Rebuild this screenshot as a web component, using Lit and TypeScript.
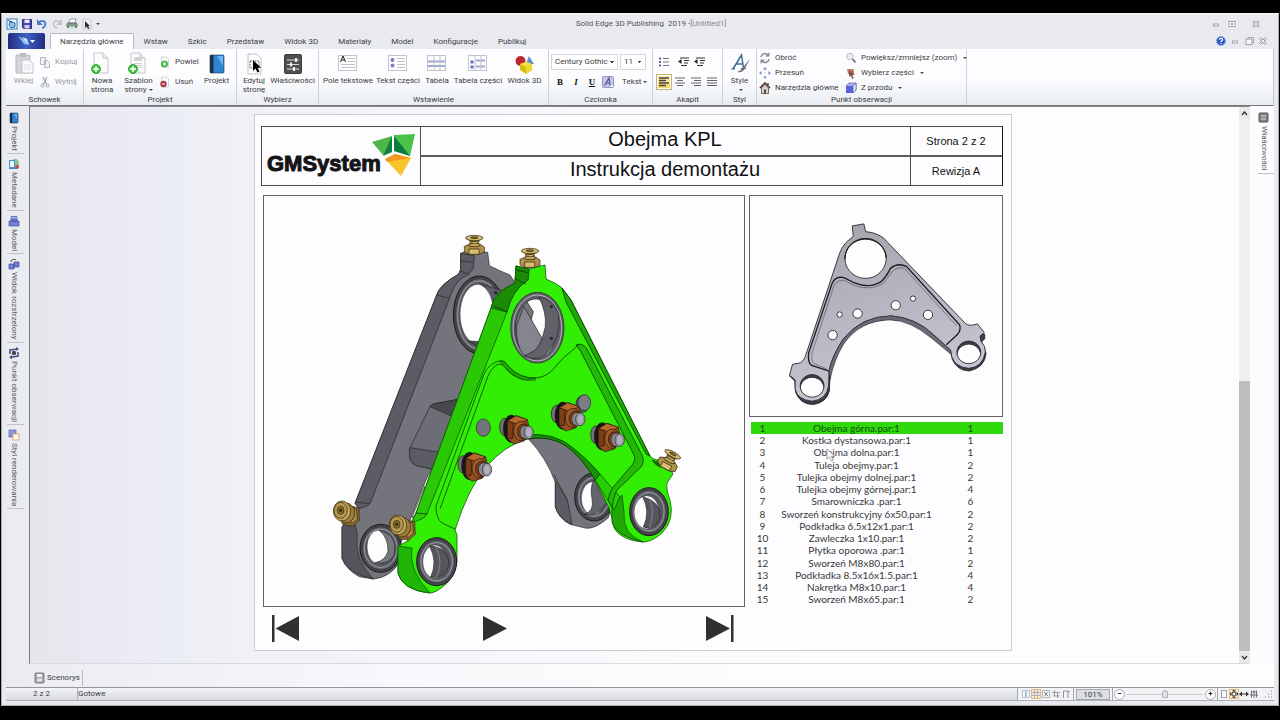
import { LitElement, html, css, svg, nothing } from "lit";
import { customElement, property, state } from "lit/decorators.js";
import { classMap } from "lit/directives/class-map.js";

const box = (w: number, h: number, body: unknown) =>
  html`<svg width=${w} height=${h} viewBox="0 0 ${w} ${h}" aria-hidden="true">${body}</svg>`;

const doc = (c = "#fbfbfb") => svg`<path d="M4 1h9l5 5v15H4z" fill=${c} stroke="#c3c5c9"/><path d="M13 1v5h5" fill="#eceef0" stroke="#c3c5c9"/>`;
const plus = (x: number, y: number, r: number) => svg`<circle cx=${x} cy=${y} r=${r} fill="#3cc63a" stroke="#239a2a" stroke-width=".8"/><path d="M${x - r * 0.6} ${y}h${r * 1.2}M${x} ${y - r * 0.6}v${r * 1.2}" stroke="#fff" stroke-width=${r * 0.4}/>`;
const lines = (ys: number[], x1: number, x2: number, c: string) => ys.map((y) => svg`<path d="M${x1} ${y}H${x2}" stroke=${c}/>`);
const book = (w: number, h: number) => svg`<rect x="1" y="1" width=${w - 2} height=${h - 2} rx="1" fill="#2f84d4" stroke="#1a3552" stroke-width=".6"/><rect x="1" y="1" width=${w * 0.22} height=${h - 2} fill="#1d3147"/><path d="M${w * 0.5} 2H${w - 2}V${h * 0.6}z" fill="#6cb5ee"/>`;

const icons: Record<string, unknown> = {
  app: box(12, 12, svg`<rect x="1" y="1" width="10" height="10" fill="#fff" stroke="#2a7fc0"/><path d="M4 3l5 2v4l-4 1-2-3z" fill="#8cc4ea" stroke="#1c6aac"/><path d="M2 2l4 3" stroke="#1c6aac"/>`),
  save: box(12, 12, svg`<path d="M1.500 1.500h9v9h-8l-1-1z" fill="#4a46b0" stroke="#302c80"/><rect x="3.500" y="1.500" width="5" height="3.500" fill="#e8e8f8"/><rect x="3.500" y="7" width="5" height="3.500" fill="#cfd0ee"/>`),
  undo: box(12, 12, svg`<path d="M3 4.500C6 1 11 4 9 7.500 8.500 9 7.500 9.800 6 10" fill="none" stroke="#4a7fd0" stroke-width="1.900"/><path d="M1 1v6h6z" fill="#4a7fd0"/>`),
  redo: box(12, 12, svg`<path d="M9 4.500C6 1 1 4 3 7.500 3.500 9 4.500 9.800 6 10" fill="none" stroke="#c2c4c9" stroke-width="1.700"/><path d="M11 1v6H5z" fill="#c2c4c9"/>`),
  print: box(12, 12, svg`<path d="M4 1h6L9 5H3z" fill="#fff" stroke="#7c8a84" stroke-width=".8"/><rect x="1" y="5" width="10" height="4.500" rx="1" fill="#889a90" stroke="#536058" stroke-width=".8"/><path d="M3 8.500h6V11H3z" fill="#cfe9d2"/>`),
  pick: box(12, 12, svg`<path d="M2 1h6l2 2v8H2z" fill="#f2f2f2" stroke="#bdbfc3" stroke-width=".8"/><path d="M4 3v7l1.700-1.600L7 11l1.400-.7L7.200 8H9z" fill="#2b2b2b"/>`),
  paste: box(22, 24, svg`<rect x="3" y="3" width="14" height="18" rx="1" fill="#d3d5da" stroke="#b7bac0"/><rect x="7" y="1" width="6" height="4" fill="#b9bcc3"/><path d="M9 8h7l4 4v9H9z" fill="#fafafa" stroke="#c3c6cc"/>${lines([13, 15, 17], 11, 18, "#dcdee2")}`),
  copy: box(12, 12, svg`<path d="M1.500 1.500h5v7h-5zM5.500 4.500h3l2 2v5h-5z" fill="#f3f3f5" stroke="#b4b7bd"/>`),
  cut: box(12, 12, svg`<path d="M4 1l3.500 7M8 1L4.500 8" stroke="#a2a5ab" stroke-width="1.300"/><circle cx="3.500" cy="9.500" r="1.500" fill="none" stroke="#a2a5ab"/><circle cx="8.500" cy="9.500" r="1.500" fill="none" stroke="#a2a5ab"/>`),
  newPage: box(24, 24, svg`${doc()}${plus(6, 17, 4.500)}`),
  template: box(24, 24, svg`${doc()}<rect x="7" y="5" width="8" height="4" fill="#d2d4d8"/>${lines([11.5, 13.5, 15.5], 7, 15, "#cfd1d5")}${plus(6, 17, 4.500)}`),
  dup: box(12, 12, svg`<path d="M2.500 1h5l2 2v8h-7z" fill="#fafafa" stroke="#c6c8cc" stroke-width=".8"/>${plus(5.500, 8, 3)}`),
  del: box(12, 12, svg`<path d="M2.500 1h5l2 2v8h-7z" fill="#fafafa" stroke="#c6c8cc" stroke-width=".8"/><circle cx="4.500" cy="8" r="3.200" fill="#a93a45"/><path d="M3 8h3" stroke="#fff"/>`),
  book: box(18, 24, svg`<g transform="translate(1 2)">${book(16, 20)}</g>`),
  edit: box(18, 24, svg`<path d="M3 2h9l4 4v16H3z" fill="#fcfcfc" stroke="#c3c5c9"/><rect x="5" y="9" width="9" height="7" fill="none" stroke="#555" stroke-dasharray="1.500 1"/><path d="M8 8v11l2.600-2.400 1.800 3.800 2-1-1.800-3.600H16z" fill="#000"/>`),
  props: box(20, 24, svg`<rect x="1.500" y="2.500" width="17" height="19" rx="1.500" fill="#505050" stroke="#3b3b3b"/><path d="M4 8h12M4 12.500h12M4 17h12" stroke="#d9d9d9" stroke-width="1.200"/><path d="M13 6v4M8 10.500v4M11 15v4" stroke="#fff" stroke-width="1.800"/>`),
  textbox: box(20, 24, svg`<rect x=".500" y="3.500" width="18" height="15" fill="#fdfdfd" stroke="#c2c5ca"/><path d="M2.500 10L5 4l2.500 6M3.500 8h3" fill="none" stroke="#222"/>${lines([6.5, 9.5], 9, 17, "#c0c3c9")}${lines([12.5, 15.5], 3, 17, "#c0c3c9")}`),
  parttext: box(20, 24, svg`<rect x=".500" y="3.500" width="18" height="15" fill="#fdfdfd" stroke="#c2c5ca"/><circle cx="4.500" cy="8" r="2" fill="#7d80c4"/><circle cx="4.500" cy="13.500" r="2" fill="#7d80c4"/>${lines([6.5, 9.5, 12.5, 15.5], 9, 17, "#c0c3c9")}`),
  table: box(20, 24, svg`<rect x=".500" y="3.500" width="18" height="15" fill="#fdfdfd" stroke="#c2c5ca"/><path d="M1 9.500h17M1 14h17" stroke="#9fa9d8" stroke-width="2"/><path d="M7 4v14M13 4v14" stroke="#c2c5ca"/>`),
  parttable: box(20, 24, svg`<rect x=".500" y="3.500" width="18" height="15" fill="#fdfdfd" stroke="#c2c5ca"/><path d="M8 8.500h9M8 14.500h9" stroke="#9fa9d8" stroke-width="2"/><path d="M7 4v14M13 4v14" stroke="#c2c5ca"/><circle cx="4" cy="10" r="1.800" fill="#6d76c0"/><circle cx="4" cy="15" r="1.800" fill="#6d76c0"/>`),
  view3d: box(22, 24, svg`<path d="M15 4l5 8h-8z" fill="#5f94cf"/><circle cx="6.500" cy="9" r="5" fill="#c12630"/><path d="M6 12l6-2 6 2v6l-6 4-6-4z" fill="#d3bd12"/><path d="M6 12l6-2 6 2-6 2.500z" fill="#f5e44c"/><path d="M12 14.500V22l6-4v-6z" fill="#eadb2e"/>`),
  hilite: box(12, 12, svg`<rect x=".500" y=".500" width="11" height="11" rx="1" fill="#c3c4e8" stroke="#9294c4"/><path d="M2.500 9.500L7 2l1 7.500M4 7h4" fill="none" stroke="#55508f" stroke-width="1.200"/><path d="M8 11l3-3v3z" fill="#fff"/>`),
  bullets: box(12, 12, svg`<path d="M5 2.500h6M5 6h6M5 9.500h6" stroke="#777"/><path d="M1 2.500h2M1 6h2M1 9.500h2" stroke="#5b62b0" stroke-width="1.800"/>`),
  outdent: box(12, 12, svg`<path d="M2 2h9M6 4.500h5M6 7h4M3 9.500h6" stroke="#333"/><path d="M0 5.500l3.500-2.500v5z" fill="#222"/>`),
  indent: box(12, 12, svg`<path d="M2 2h9M6 4.500h5M6 7h4M3 9.500h6" stroke="#333"/><path d="M0 5.500l3.500-2.500v5z" fill="#222"/>`),
  left: box(12, 12, svg`<path d="M1 2h10M1 4.500h7M1 7h10M1 9.500h7" stroke="#444" stroke-width="1.300"/>`),
  center: box(12, 12, svg`<path d="M1 2h10M3 4.500h6M1 7h10M3 9.500h6" stroke="#666"/>`),
  right: box(12, 12, svg`<path d="M1 2h10M4 4.500h7M1 7h10M4 9.500h7" stroke="#666"/>`),
  justify: box(12, 12, svg`<path d="M1 2h10M1 4.500h10M1 7h10M1 9.500h10" stroke="#666"/>`),
  style: box(22, 24, svg`<path d="M4 17L12.500 3l2 13M7.500 12h6" fill="none" stroke="#3b6d9e" stroke-width="1.500"/><path d="M2 17h4M12 16.500h5" stroke="#3b6d9e"/><path d="M21 7l-6 7c-2 2-3 5-7 6 4 1 7-1 8-4z" fill="#6d7176"/>`),
  rotate: box(12, 12, svg`<path d="M2 5a4 4 0 017-2M10 7a4 4 0 01-7 2" fill="none" stroke="#8b8e93" stroke-width="1.600"/><path d="M10.500 0v4.500H6zM1.500 12V7.500H6z" fill="#8b8e93"/>`),
  pan: box(12, 12, svg`<path d="M6 0l2 2.500H4zM6 12l2-2.500H4zM0 6l2.500-2v4zM12 6L9.500 4v4z" fill="#6d8fc6"/><path d="M5.500 6h1" stroke="#8aa"/>`),
  home: box(12, 12, svg`<path d="M1 6l5-5 5 5" fill="none" stroke="#4d3a35" stroke-width="1.600"/><path d="M2.500 6L6 2.500 9.500 6v5.500h-7z" fill="#d9cfcb" stroke="#5b4843" stroke-width=".8"/><path d="M5 7.500h2v4H5z" fill="#5b4843"/><path d="M9 1v2" stroke="#4d3a35" stroke-width="1.400"/>`),
  zoom: box(12, 12, svg`<circle cx="5" cy="4.500" r="3.300" fill="#e3edf5" stroke="#b7c1c9"/><path d="M7.500 7l3 3.500" stroke="#666" stroke-width="1.600"/>`),
  selpart: box(12, 12, svg`<path d="M2 2h6l1 1v4H3z" fill="#c77a64"/><path d="M4 3v7l1.800-1.600L7.300 12l1.500-.700-1.500-3.300H10z" fill="#77554a"/>`),
  cube: box(12, 12, svg`<path d="M1 4l3-3h7v7l-3 3z" fill="#a9aef0" stroke="#555a9c" stroke-width=".7"/><rect x="1" y="4" width="7" height="7" fill="#5a63de"/><path d="M8 4l3-3v7l-3 3z" fill="#e8e9fb" stroke="#555a9c" stroke-width=".7"/>`),
  rBook: box(12, 12, svg`<g transform="translate(1 0)">${book(10, 12)}</g>`),
  rMeta: box(12, 12, svg`<path d="M5 1h4l2 3v4H5z" fill="#8cc48c"/><rect x="1.500" y="2.500" width="5" height="7" fill="#eaf5fc" stroke="#4a94c4"/><circle cx="9" cy="9" r="2" fill="#c44a4a"/><path d="M1 10.500h8" stroke="#3b85b8"/>`),
  rModel: box(12, 12, svg`<path d="M1 6h10v5H1zM3 1.500h6V6H3z" fill="#6f7fd8" stroke="#4453a8" stroke-width=".7"/><path d="M3 2.500h6" stroke="#b5bef2"/>`),
  rExplode: box(12, 12, svg`<path d="M1 6h5v5H1zM6 4h5v5H6z" fill="#7280da" stroke="#38459a" stroke-width=".7"/><path d="M3 4c0-3 3-3 5-2" fill="none" stroke="#333"/>`),
  rView: box(12, 12, svg`<path d="M2 7V3l8-1M10 5v4l-8 1.500" fill="none" stroke="#4a4f86" stroke-width="1.600"/><circle cx="6" cy="6" r="2.200" fill="#44484f"/><path d="M8 0l3 2-3 2zM4 8L1 10.500 4 12z" fill="#4a4f86"/>`),
  rStyle: box(12, 12, svg`<rect x="1" y="1" width="7" height="7" fill="#8c95d8" stroke="#5d66ac" stroke-width=".7"/><rect x="5" y="5" width="6" height="6" fill="#fff6ee" stroke="#dba472" stroke-width=".9"/>`),
  rProps: box(12, 12, svg`<rect x="1" y="1" width="9" height="9" rx=".800" fill="#808080" stroke="#555"/><path d="M3 4h5M3 7h5" stroke="#ddd"/>`),
  scene: box(12, 12, svg`<rect x="1" y="1" width="9" height="10" rx="1" fill="#a9abae" stroke="#606367" stroke-width=".8"/><rect x="3" y="2" width="5" height="3" fill="#f2f2f2"/><rect x="3" y="6.500" width="5" height="3" fill="#e4e4e4"/>`),
  s1: box(10, 10, svg`<path d="M1.500 1.500h3v7h-3zM5.500 1.500h3v7h-3z" fill="#f7fbff" stroke="#a7bfd2"/>`),
  s2: box(10, 10, svg`<path d="M1 3.500h8M1 6.500h8M3.500 1v8M6.500 1v8" stroke="#a5b0c6"/>`),
  s3: box(10, 10, svg`<path d="M1.500 1.500h7v7h-7z" fill="none" stroke="#b3b6bb"/><path d="M3 3l4 4M6.500 3L4 7" stroke="#82858b"/>`),
  s4: box(10, 10, svg`<path d="M1 3.500h8M2 7h7M3.500 1v6M6.500 3v6" stroke="#9da0a6"/>`),
  s5: box(10, 10, svg`<path d="M2.500 9V2H7v7M7 2.500h2" fill="none" stroke="#8e9197"/>`),
  z1: box(10, 10, svg`<rect x="2.500" y="1.500" width="5" height="7" fill="#fdfdfd" stroke="#9da0a6"/>`),
  z2: box(10, 10, svg`<path d="M5 0l2 2.500H3zM5 10l2-2.500H3zM0 5l2.500-2v4zM10 5L7.500 3v4z" fill="#333"/><rect x="3.500" y="3.500" width="3" height="3" fill="#fff" stroke="#555" stroke-width=".8"/>`),
  z3: box(10, 10, svg`<path d="M0 5l3-2.500v5zM10 5L7 2.500v5z" fill="#333"/><path d="M2 5h6" stroke="#333"/>`),
  z4: box(10, 10, svg`<path d="M5 1v8M2 3h6M2.500 1.500v7M7.500 1.500v7M1 6h8" stroke="#55585e" stroke-width=".8"/>`),
  min: box(12, 10, svg`<rect x="3.500" y="5" width="5" height="2" fill="#fff" stroke="#8d9096" stroke-width=".8"/>`),
  max: box(12, 10, svg`<rect x="3" y="2.500" width="6" height="5" fill="#fff" stroke="#8d9096" stroke-width=".8"/><rect x="5" y="4" width="2" height="2" fill="#999"/>`),
  restore: box(12, 10, svg`<path d="M3 3h6v5.500H3zM5 3V1.500h5.500V7H9" fill="#f6f6f6" stroke="#8d9096" stroke-width=".8"/>`),
  close: box(12, 10, svg`<path d="M3 2l6 6M9 2L3 8" stroke="#8d9096" stroke-width="2.400"/><path d="M3 2l6 6M9 2L3 8" stroke="#fff"/>`),
  help: box(12, 12, svg`<circle cx="6" cy="6" r="4.500" fill="#2b5cc4" stroke="#8fa9dc"/><path d="M4.500 4.800C4.500 3 7.800 3 7.500 4.800 7.400 5.700 6 5.700 6 7M6 8v1" fill="none" stroke="#fff" stroke-width="1.200"/>`),
};

const controlBase = css`
  button, select, input { font: inherit; color: inherit; margin: 0; }
  button { background: none; border: 0; padding: 0; }
  svg { display: block; flex: none; }
  .caret { display: inline-block; width: 0; height: 0; border: 2px solid transparent; border-bottom-width: 0; border-top-color: #444; vertical-align: middle; }
`;

/** Ribbon command: a large icon over its caption, or a small one beside it. */
@customElement("ribbon-tool")
export class RibbonTool extends LitElement {
  @property() icon = "";
  @property() label = "";
  @property({ type: Boolean }) large = false;
  @property({ type: Boolean }) menu = false;
  @property({ type: Boolean }) active = false;
  @property({ type: Boolean }) muted = false;
  @property({ type: Boolean }) bare = false;
  static styles = [controlBase, css`
    :host { display: block; min-width: 0; }
    .tool { display: flex; align-items: center; gap: 4px; line-height: 12px; white-space: nowrap; }
    .large { flex-direction: column; gap: 0; width: 100%; line-height: 9px; text-align: center; }
    .large .text { white-space: pre-line; }
    .active { background: linear-gradient(#fbeeb4, #f7d768); outline: 1px solid #c9b26c; outline-offset: 1px; }
    .muted { color: #96989d; }
    .caret { margin-left: 6px; }
    .large .caret, .tight .caret { margin-left: 2px; }
  `];
  render() {
    const caret = this.menu ? html`<span class="caret"></span>` : nothing;
    return html`<button class=${classMap({ tool: true, large: this.large, active: this.active, muted: this.muted, tight: !this.icon })} aria-label=${this.label.replace("\n", " ")}>
      ${icons[this.icon]}${this.bare ? nothing : html`<span class="text">${this.label}${caret}</span>`}
    </button>`;
  }
}

const ink = "#222226";
const ring = (x: number, y: number, rx: number, ry: number, hx: number, hy: number, hrx: number, hry: number) => svg`
  <ellipse cx=${x} cy=${y} rx=${rx} ry=${ry} fill="#45454c" stroke="#19191c" stroke-width="3"/>
  <ellipse cx=${x} cy=${y} rx=${rx - 7} ry=${ry - 8} fill="#686870" stroke="#202024" stroke-width="1.500"/>
  <ellipse cx=${x} cy=${y} rx=${rx - 13} ry=${ry - 15} fill="#58585f" stroke="#b5b5c2" stroke-width="2"/>
  <ellipse cx=${hx} cy=${hy} rx=${hrx} ry=${hry} fill="#fdfdfe" stroke=${ink} stroke-width="1.500"/>`;

const bolt = (x: number, y: number) => svg`<g transform="translate(${x} ${y})" stroke="#1c120c" stroke-width="2">
  <ellipse cx="-34" cy="-8" rx="15" ry="26" fill="#74747d"/>
  <ellipse cx="-14" cy="-3" rx="24" ry="41" fill="#16161a"/>
  <path d="M-26-26L0-42 34-30 42 4 24 34-6 43-26 28z" fill="#96501f"/>
  <path d="M-26-26L0-42 34-30 10-16-8-20z" fill="#b9682c"/>
  <path d="M-26-26l18 6-2 46-16 2z" fill="#7c3e17"/>
  <ellipse cx="16" cy="4" rx="23" ry="29" fill="#a65b26"/>
  <ellipse cx="22" cy="6" rx="18" ry="23" fill="#7c4019"/>
  <ellipse cx="26" cy="7" rx="14" ry="19" fill="#8a8a95"/>
  <path d="M26-11H38V27H26z" fill="#8a8a95" stroke="none"/>
  <ellipse cx="38" cy="8" rx="14" ry="19" fill="#b1b1bf"/><ellipse cx="38" cy="8" rx="10" ry="14" fill="none" stroke="#63636d" stroke-width="1.500"/></g>`;

/** Upright grease nipple whose seat is at (x, y). */
const nipple = (x: number, y: number, r = 0) => svg`<g transform="translate(${x} ${y}) rotate(${r})" stroke="#2c210a" stroke-width="2">
  <path d="M-30-18L-15-24H18L30-16V0L14 6H-16L-30-2z" fill="#b0914a"/><path d="M-16-10L14-10V6H-16z" fill="#d9bd72"/>
  <path d="M-13-42H13V-18H-13z" fill="#a5873f"/><path d="M-4-42H6V-18H-4z" fill="#e3cc87" stroke="none"/>
  <ellipse cx="0" cy="-22" rx="18" ry="5" fill="#c5a75c"/><path d="M-26-44Q0-20 26-44" fill="#8e7433"/>
  <ellipse cx="0" cy="-43" rx="26" ry="8" fill="#d9bd72"/><ellipse cx="0" cy="-44" rx="11" ry="3" fill="#8e7433"/></g>`;

const nippleFront = (x: number, y: number) => svg`<g transform="translate(${x} ${y})" stroke="#2c210a" stroke-width="2">
  <path d="M-14 14L22-14 44-10 46 28 26 46-4 40z" fill="#8e6f2f"/><path d="M10-10l28 4 2 32-18 14z" fill="#aa8a44"/>
  <ellipse cx="6" cy="6" rx="26" ry="30" fill="#9c7d3a"/><ellipse cx="-6" cy="0" rx="26" ry="30" fill="#c5a75c"/>
  <ellipse cx="-10" cy="-2" rx="20" ry="24" fill="#b6974f"/><ellipse cx="-10" cy="-2" rx="10" ry="12" fill="#8e7433"/><circle cx="-10" cy="-2" r="4" fill="#3d2f10"/></g>`;

const assembly = svg`
  <g transform="translate(320 225) scale(.33333)" stroke=${ink} stroke-width="2" stroke-linejoin="round">
    <path d="M422 85L440 78 503 82 508 122Q540 138 570 150L640 260 560 560 415 560 318 765 268 890 240 960 240 1010Q210 1058 160 1062L118 1055Q80 1035 66 1000V905L76 895 112 888 118 850 105 835 350 210Q358 180 415 148L422 135z" fill="#74747d"/>
    <path d="M422 85L463 92 460 128Q452 148 424 160 400 180 388 222L152 832Q146 846 116 850L105 835 350 210Q358 180 415 148L422 135z" fill="#5c5c65"/>
    <path d="M350 210L388 220M418 136L446 148M422 108L460 112M108 832L150 836" fill="none"/>
    <path d="M66 905L76 895 106 900 112 930Q100 1000 160 1062 80 1045 66 1000z" fill="#55555d"/>
    <path d="M330 545Q334 538 344 536L420 522 420 560 350 735 290 722Q262 712 270 668z" fill="#6d6d76"/>
    <path d="M330 545Q334 538 344 536L420 522 416 545 396 574z" fill="#47474e"/>
    <path d="M270 668L372 684 350 735 290 722Q262 712 270 668z" fill="#5b5b63"/>
    <path d="M314 785L276 878 290 868 316 795z" fill="#fdfdfe"/>
    ${ring(478, 270, 78, 117, 474, 268, 54, 90)}
    <path d="M482 178L560 200 575 250 520 260Q520 200 482 178z" fill="#5d5d66"/><circle cx="527" cy="203" r="4" fill="#333"/>
    <path d="M446 348L486 350 476 366z" fill="#4a4a52"/>
    ${ring(182, 970, 62, 72, 174, 966, 33, 50)}
    <path d="M178 916Q236 930 222 990 205 1022 166 1013 194 1008 204 980 206 940 178 916z" fill="#78787f"/>
    ${nipple(463, 82)}
    ${nippleFront(72, 858)}
  </g>
  <g transform="translate(480 235) scale(.33333)" stroke=${ink} stroke-width="2" stroke-linejoin="round">
    <path d="M146 612L210 606 320 668 400 800 385 848Q350 880 320 880L270 868Q235 850 226 815V742Q200 670 146 612z" fill="#74747d"/>
    <path d="M226 738L262 795 276 868Q235 850 226 815zM222 720L262 795" fill="#5c5c65"/>
    ${ring(342, 786, 58, 72, 338, 790, 34, 50)}
    <path d="M340 738Q330 760 336 790 344 830 312 838 350 850 382 800L356 738z" fill="#64646c"/>
  </g>
  <g stroke="#0c5a04" stroke-width=".800" stroke-linejoin="round">
    <path fill-rule="evenodd" d="M516 266L529 269 545 265 546 279Q556 283 562 288L571 300 650 456Q655 462 665 459L673 474 667 483Q666 490 670 500 675 520 662 533 652 542 643 542 630 541 622 536 612 530 612 518L609 508 595 480Q583 458 565 445 548 435 527 439 504 446 487 466 468 488 455 530L457 535V562Q453 578 446 584 436 593 430 593 416 592 406 585 399 579 398 573V546L408 541Q412 532 411 523L416 513 491 308Q494 292 515 283z
      M537 293a25 33 0 1 0 .100 0z" fill="#32ee05"/>
    <path d="M516 266L529 269 528 280Q512 290 507 312L427 514Q424 520 412 522L416 513 491 308Q494 292 515 283z" fill="#2bc806"/>
    <path d="M516 266L529 269 528 280Q512 290 507 312L491 308Q494 292 515 283z" fill="#1b8a05"/>
    <path d="M494 306L507 312M515 279L526 284M517 270L529 273M416 513L427 514" fill="none" stroke="#063802"/>
    <path d="M398 546L412 548Q408 570 430 593 402 590 398 573z" fill="#20b606"/>
    <path d="M622 495L612 508V522Q616 536 643 542 622 534 624 512z" fill="#1fa806"/>
    <path d="M595 480L600 474 620 497 614 510z" fill="#28cc06"/>
    <path d="M507 440Q540 428 565 442 585 456 600 474L595 480Q583 458 565 445 548 435 527 439z" fill="#189005" stroke="#063802"/>
    <path d="M576 345Q582 342 587 349L642 455Q645 462 641 467L618 489Q614 493 612 508L608 500Q610 490 614 486L633 464Q636 460 634 455L580 350z" fill="#23b806" stroke="#064002"/>
    <path d="M500 361Q505 360 508 366 520 379 536 378 548 377 556 366 562 358 574 349L579 344M436 506L484 374Q490 362 500 361M440 509L488 376Q494 364 500 364 504 364 507 370 518 382 536 380M436 506Q436 519 442 523L455 529" fill="none" stroke="#064002"/>
    <path d="M500 361Q505 360 508 366 520 379 536 378L524 380Q508 374 500 361z" fill="#1fa806"/>
    <path d="M652 460Q660 464 665 459L668 464Q660 472 652 460z" fill="#146e05"/>
    <path d="M562 288L571 300 650 456 646 454 566 302z" fill="#1fa806" stroke="#063802"/>
  </g>
  <g transform="translate(480 235) scale(.33333)" stroke=${ink} stroke-width="2">
    <path fill-rule="evenodd" d="M172 172a80 106 0 1 0 .100 0zM168 192a62 90 0 1 1-.100 0z" fill="#606069"/>
    <ellipse cx="172" cy="279" rx="73" ry="99" fill="none" stroke="#b4b4c2" stroke-width="3"/>
    <path d="M132 215L186 310 170 345 132 362Q106 330 110 270z" fill="#85858e"/>
    <path d="M176 186Q200 230 196 275L186 312Q178 345 134 364 165 378 194 362 246 310 236 238 222 192 176 186z" fill="#62626b"/>
    <circle cx="214" cy="215" r="4" fill="#333"/><circle cx="214" cy="310" r="4" fill="#333"/>
    <ellipse cx="308" cy="507" rx="20" ry="25" fill="#5c5c65"/><ellipse cx="313" cy="503" rx="19" ry="24" fill="#7c7c85"/>
    <ellipse cx="10" cy="578" rx="21" ry="26" fill="#74747d"/>
    ${bolt(108, 584)}${bolt(263, 545)}${bolt(381, 607)}${bolt(-17, 696)}
    ${ring(507, 830, 58, 72, 500, 832, 38, 50)}
    <path d="M488 785Q512 830 490 876 520 888 540 850 545 800 488 785z" fill="#55555d"/><path d="M508 790Q526 830 508 878" fill="none" stroke="#9a9aa5"/>
    ${nipple(150, 91)}${nipple(558, 696, 28)}
  </g>
  <g transform="translate(320 225) scale(.33333)" stroke=${ink} stroke-width="2">
    ${ring(350, 1010, 60, 72, 344, 1010, 36, 50)}
    <path d="M328 962Q354 1010 332 1056 370 1066 388 1020 386 966 328 962z" fill="#55555d"/><path d="M348 966Q372 1010 348 1060" fill="none" stroke="#9a9aa5"/>
    ${nippleFront(240, 900)}
  </g>`;

const part = svg`
  <defs><linearGradient id="steel" x1="0" y1="0" x2=".300" y2="1"><stop offset="0" stop-color="#a2a2aa"/><stop offset=".600" stop-color="#b8b8c4"/><stop offset="1" stop-color="#c6c6d4"/></linearGradient></defs>
  <g transform="translate(745 190) scale(.33333)" stroke="#1c1c20" stroke-width="2.500" stroke-linejoin="round">
    <path fill-rule="evenodd" d="M134 560L150 575 152 608Q165 645 205 646 246 640 254 605L256 560Q262 530 272 510 300 400 430 390 530 390 590 450L622 490 624 510Q640 545 676 545 722 535 726 492L712 458 722 448 722 435 440 300 160 540z
      M202 564a36 34 0 1 0 .100 0zM674 464a36 34 0 1 0 .100 0z" fill="#3e3e46"/>
    <path fill-rule="evenodd" d="M323 108L358 102 363 125Q410 130 430 158L664 402Q675 412 700 403L721 430 708 440 711 456Q725 470 724 488 716 534 674 537 632 534 622 500L619 482 568 436Q515 385 440 379 350 380 295 450 262 500 253 545L252 588Q246 632 202 636 158 632 151 600V572L134 558 143 525 160 522Q175 520 182 500L285 190Q296 160 326 140z
      M363 146a62 60 0 1 0 .100 0zM202 556a36 34 0 1 0 .100 0zM674 455a36 34 0 1 0 .100 0z" fill="url(#steel)"/>
    <path d="M252 545L200 528Q188 518 192 490L262 282Q272 258 298 264L330 280Q375 298 410 276 425 262 438 236 460 218 486 230L646 406Q652 420 640 435L606 466" fill="none" stroke-width="4"/>
    <path d="M248 540L206 522Q198 512 202 490L268 288Q278 270 300 272L330 288Q378 304 416 282L444 244Q462 230 480 236L638 410" fill="none" stroke="#55555e" stroke-width="2"/>
    <path d="M253 545Q262 500 295 450 350 380 440 379 515 385 568 436L619 482 622 496 560 445Q500 395 440 391 345 392 296 466 268 512 256 572z" fill="#6a6a74" stroke-width="1.500"/>
    <path d="M301 208a62 60 0 0 1 124-4 60 56 0 0 0-124 4z" fill="#3e3e46"/>
    <g fill="#fdfdfe"><circle cx="264" cy="437" r="14"/><circle cx="285" cy="375" r="8"/><circle cx="339" cy="372" r="14"/><circle cx="454" cy="347" r="14"/><circle cx="506" cy="327" r="8"/><circle cx="551" cy="376" r="14"/></g>
  </g>`;

const parts: [string, number][] = [
  ["Obejma górna.par:1", 1], ["Kostka dystansowa.par:1", 1], ["Obejma dolna.par:1", 1], ["Tuleja obejmy.par:1", 2],
  ["Tulejka obejmy dolnej.par:1", 2], ["Tulejka obejmy górnej.par:1", 4], ["Smarowniczka .par:1", 6],
  ["Sworzeń konstrukcyjny 6x50.par:1", 2], ["Podkładka 6.5x12x1.par:1", 2], ["Zawleczka 1x10.par:1", 2],
  ["Płytka oporowa .par:1", 1], ["Sworzeń M8x80.par:1", 2], ["Podkładka 8.5x16x1.5.par:1", 4], ["Nakrętka M8x10.par:1", 4], ["Sworzeń M8x65.par:1", 2],
];

/** The printable sheet: title block, two views, parts list and playback keys. */
@customElement("publication-sheet")
export class PublicationSheet extends LitElement {
  @state() private selected = 0;
  static styles = [controlBase, css`
    :host { display: block; box-sizing: border-box; width: 62%; min-width: 758px; padding: 11px 8px 8px 6px; background: #fdfdff; border: 1px solid #cbccd0; color: #111; font-family: "Liberation Sans", Arial, sans-serif; }
    .title-block { display: grid; grid-template-columns: 159px 1fr 92px; border: 1px solid #4c4c4e; border-right-color: #111; }
    .logo { display: flex; align-items: center; padding: 0 5px; border-right: 1px solid #4c4c4e; }
    .brand { width: 149px; height: 46px; }
    .wordmark { font: 700 22px "Liberation Sans", Arial, sans-serif; fill: #151517; stroke: #151517; stroke-width: 1; }
    .titles, .meta { display: grid; grid-template-rows: 28px 28px; row-gap: 2px; background: #5c5c5f; }
    .meta { border-left: 1px solid #4c4c4e; }
    .line { display: flex; align-items: center; justify-content: center; box-sizing: border-box; margin: 0; background: #fdfdff; font-size: 20px; font-weight: 400; line-height: 24px; padding-bottom: 4px; }
    .meta .line { font-size: 11px; padding: 0; }
    .body { display: grid; grid-template-columns: 482px minmax(0, 1fr); gap: 4px; margin: 9px 0 0 2px; }
    .view { display: block; box-sizing: border-box; width: 100%; background: #fdfdfe; border: 1px solid #626266; }
    .side { display: flex; flex-direction: column; gap: 5px; }
    .list { position: relative; margin-left: 2px; }
    table { width: 100%; height: 184px; border-collapse: collapse; font: 10px Lato, "Century Gothic", sans-serif; color: #38383a; }
    td { padding: 0; line-height: 11px; text-align: center; }
    .no { width: 24px; }
    .qty { width: 64px; }
    .on td { background: #2fd90b; color: #12500a; }
    .cursor { position: absolute; left: 75px; top: 26px; }
    .nav { display: grid; grid-template-columns: 211px 223px 28px; margin: 8px 0 0 11px; }
    .nav button { display: block; justify-self: start; }
  `];
  render() {
    return html`
      <header class="title-block">
        <div class="logo">
          <svg class="brand" viewBox="0 0 149 46" role="img" aria-label="GM System">
            <text class="wordmark" x="0" y="38">GMSystem</text>
            <path d="M105 9L125 3V19L116 22z" fill="#4bb749"/><path d="M125 3V19L116 23z" fill="#0f7f42"/>
            <path d="M127 2L148 1 143 23 128 18z" fill="#4bc14a"/><path d="M127 3V18L143 23z" fill="#0c7b40"/>
            <path d="M118 26L128 21 144 25 134 43z" fill="#f9c32c"/><path d="M118 26L128 21 144 25 120 29z" fill="#f39a23"/>
          </svg>
        </div>
        <div class="titles"><h1 class="line">Obejma KPL</h1><h2 class="line">Instrukcja demontażu</h2></div>
        <div class="meta"><p class="line">Strona 2 z 2</p><p class="line">Rewizja A</p></div>
      </header>
      <div class="body">
        <svg class="view" viewBox="264 196 480 410" role="img" aria-label="Obejma KPL">${assembly}</svg>
        <div class="side">
          <svg class="view" viewBox="750 196 253 221" role="img" aria-label="Obejma górna">${part}</svg>
          <div class="list">
            <table><tbody>${parts.map(([name, n], i) => html`
              <tr class=${classMap({ on: i === this.selected })} @click=${() => (this.selected = i)}><td class="no">${i + 1}</td><td>${name}</td><td class="qty">${n}</td></tr>`)}
            </tbody></table>
            <svg class="cursor" width="10" height="14" viewBox="0 0 10 14" aria-hidden="true"><path d="M1 1v10l2.500-2 2 4 1.800-1-2-3.700H9z" fill="#fff" stroke="#888" stroke-width=".8"/></svg>
          </div>
        </div>
      </div>
      <nav class="nav">
        <button aria-label="Początek"><svg width="27" height="27" viewBox="0 0 27 27"><path d="M0 0h2.500v27H0zM3.500 13.500L27 1v25z" fill="#303033"/></svg></button>
        <button aria-label="Odtwórz"><svg width="25" height="27" viewBox="0 0 25 27"><path d="M0 1l24 12.500L0 26z" fill="#303033"/></svg></button>
        <button aria-label="Koniec"><svg width="28" height="27" viewBox="0 0 28 27"><path d="M0 1l24 12.500L0 26zM25 0h2.500v27H25z" fill="#303033"/></svg></button>
      </nav>`;
  }
}

const T = (icon: string, label: string, o: { large?: boolean; menu?: boolean; muted?: boolean; active?: boolean; bare?: boolean } = {}) =>
  html`<ribbon-tool .icon=${icon} .label=${label} .large=${!!o.large} .menu=${!!o.menu} .muted=${!!o.muted} .active=${!!o.active} .bare=${!!o.bare}></ribbon-tool>`;
const L = { large: true };
const B = { bare: true };

@customElement("app-root")
export class AppRoot extends LitElement {
  @state() private zoom = 50;
  static styles = [controlBase, css`
    :host { display: flex; flex-direction: column; box-sizing: border-box; min-height: 100vh; padding: 13px 1px 14px; background: #000; color: #3b3d42; font: 8px/12px Roboto, "Open Sans", sans-serif; }
    .window { flex: 1; display: flex; flex-direction: column; padding: 0 4px 4px; background: #e9eaf0; border: 1px solid #a8aab0; border-top-color: #f4f4f8; }
    .caption { display: grid; grid-template-columns: 1fr auto 1fr; align-items: center; height: 19px; }
    .quick { display: flex; gap: 3px; align-items: center; }
    .title { margin-left: 22px; white-space: pre; color: #55575c; }
    .dim { color: #85878c; }
    .wincontrols { display: flex; justify-content: flex-end; gap: 4px; padding-right: 12px; }
    .wincontrols.doc { margin-left: auto; padding-right: 5px; gap: 2px; align-items: center; }
    .tabs { display: flex; align-items: stretch; height: 16px; }
    .appmenu { display: flex; align-items: center; justify-content: center; width: 37px; margin: 0 5px 0 2px; border-radius: 2px 2px 0 0; background: linear-gradient(90deg, #232c7d, #3c62c4 50%, #232c7d); }
    .tab { padding: 0 9px; border: 1px solid transparent; border-bottom: 0; }
    .tab.current { background: #fdfdff; border-color: #b9bbc1; border-radius: 2px 2px 0 0; }
    .ribbon { display: flex; height: 57px; box-sizing: border-box; background: linear-gradient(#fdfdff 50%, #e9edf2); border: 1px solid #c4c6cc; border-width: 0 1px 1px 0; border-bottom-color: #74767c; }
    .group { display: grid; grid-template-rows: 42px 11px; box-sizing: border-box; padding: 3px 2px 0; border-right: 1px solid #cfd2d8; }
    .name { text-align: center; line-height: 11px; }
    .tools { display: grid; align-items: start; }
    .stack { display: grid; grid-auto-rows: 20px; padding-top: 4px; }
    .stack.three { grid-auto-rows: 14px; row-gap: 1px; padding-top: 0; }
    .clip { width: 78px; } .clip .tools { grid-template-columns: 31px 1fr; }
    .project { width: 153px; } .project .tools { grid-template-columns: 32px 41px 1fr 35px; }
    .select { width: 82px; } .select .tools { grid-template-columns: 30px 1fr; }
    .insert { width: 230px; } .insert .tools { grid-template-columns: 54px 46px 32px 50px 1fr; }
    .font { width: 104px; } .para { width: 70px; } .styl { width: 34px; }
    .viewpoint { width: 210px; } .viewpoint .tools { grid-template-columns: 86px 1fr; }
    .two { display: grid; grid-template-rows: 20px 20px; align-items: center; }
    .row { display: flex; align-items: center; gap: 4px; padding-left: 3px; }
    .row.fields { padding-left: 0; gap: 2px; }
    .field { appearance: none; height: 16px; padding: 0 3px; border: 1px solid #d4d6da; border-radius: 0; background: linear-gradient(45deg, transparent 50%, #444 50%) right 5px top 6px / 2px 2px no-repeat, linear-gradient(-45deg, transparent 50%, #444 50%) right 3px top 6px / 2px 2px no-repeat, #fff; }
    .family { width: 67px; } .size { width: 26px; }
    .fmt { width: 12px; font: 700 9px/12px "Liberation Serif", serif; color: #111; }
    .italic { font-style: italic; } .under { text-decoration: underline; }
    .main { flex: 1; display: flex; min-height: 0; }
    .rail { width: 23px; padding-top: 2px; background: #ebecf2; }
    .rail.right { width: 24px; background: #fcfcfe; }
    .dock { display: flex; align-items: center; writing-mode: vertical-rl; gap: 2px; width: 17px; margin: 0 1px; padding: 4px 3px 2px 0; line-height: 10px; color: #55575e; border-bottom: 1px solid #bfc1c8; }
    .right .dock { margin-left: 7px; }
    .workspace { flex: 1; display: flex; border-left: 1px solid #7b7d83; border-bottom: 1px solid #d8dade; background: linear-gradient(90deg, #e5e6eb, #eaebf5 8%, #eff1f5 17%, #f9fafc 50%, #fdfdfd 70%); border-top: 1px solid #85878d; }
    .canvas { flex: 1; display: flex; justify-content: center; align-items: flex-start; padding: 7px 4px 11px 0; }
    .scroll { display: flex; flex-direction: column; width: 11px; background: #f0f0f1; }
    .scroll button { display: grid; place-items: center; height: 12px; background: #e9e9ea; }
    .before { flex: 262; } .thumb { flex: 270; background: #bdbdbe; }
    .scenes { display: flex; height: 24px; align-items: center; box-sizing: border-box; background: linear-gradient(90deg, #ebecf2, #f7f8fb 30%, #fdfdfd 60%); border-bottom: 1px solid #95979d; }
    .scene { display: flex; align-items: center; gap: 1px; height: 16px; margin: 4px 0 0 28px; padding-right: 2px; border-right: 1px solid #bbbdc3; }
    .status { display: flex; align-items: center; height: 12px; background: linear-gradient(#f3f4f7, #d9dbe1); border-bottom: 1px solid #aeb1b8; }
    .pages { width: 72px; box-sizing: border-box; padding-left: 27px; border-right: 1px solid #aeb1b8; }
    .cell { display: flex; align-items: center; height: 12px; padding: 0 1px; border-left: 1px solid #a3a5ab; background: #f2f3f5; }
    .cell.fill { margin-left: auto; padding: 0 2px 0 3px; }
    .on { outline: 1px solid #e4bb7c; outline-offset: -1px; background: #fdebc4; }
    .percent { width: 34px; height: 11px; margin: 0 1px; background: #dcdee3; border: 1px solid #a6a9af; line-height: 9px; }
    .round { width: 11px; height: 11px; border: 1px solid #a9abb0; border-radius: 50%; background: #fff; line-height: 8px; color: #222; font-weight: 700; }
    .zoom { appearance: none; width: 76px; height: 10px; margin: 0 2px; background: linear-gradient(#c8cace, #c8cace) center / 100% 1px no-repeat; }
    .zoom::-webkit-slider-thumb { appearance: none; width: 6px; height: 8px; background: #e1e3e6; border: 1px solid #a9abb0; border-radius: 3px 3px 0 0; }
    .grip { width: 14px; display: flex; justify-content: flex-end; }
  `];

  private dock(icon: string, label: string) {
    return html`<button class="dock">${icons[icon]}<span>${label}</span></button>`;
  }

  render() {
    const tabs = ["Narzędzia główne", "Wstaw", "Szkic", "Przedstaw", "Widok 3D", "Materiały", "Model", "Konfiguracje", "Publikuj"];
    return html`<div class="window">
      <header class="caption">
        <div class="quick">${["app", "save", "undo", "redo", "print", "pick"].map((i) => html`<button aria-label=${i}>${icons[i]}</button>`)}<span class="caret"></span></div>
        <div class="title">Solid Edge 3D Publishing  2019 -<span class="dim">[Untitled1]</span></div>
        <div class="wincontrols">${["min", "max"].map((i) => html`<button aria-label=${i}>${icons[i]}</button>`)}<span></span><span></span><button aria-label="close">${icons.close}</button></div>
      </header>
      <nav class="tabs">
        <button class="appmenu" aria-label="Menu">${box(20, 14, svg`<path d="M1 2l7 4 4 5-5-1z" fill="#8fc0f4"/><path d="M5 3l5 2 2 6z" fill="#dcebfc"/><path d="M13 6h5l-2.500 3z" fill="#fff"/>`)}</button>
        ${tabs.map((t, i) => html`<button class=${classMap({ tab: true, current: i === 0 })}>${t}</button>`)}
        <div class="wincontrols doc">${["help", "min", "restore", "close"].map((i) => html`<button aria-label=${i}>${icons[i]}</button>`)}</div>
      </nav>
      <section class="ribbon">
        <div class="group clip"><div class="tools">${T("paste", "Wklej", { large: true, muted: true })}<div class="stack">${T("copy", "Kopiuj", { muted: true })}${T("cut", "Wytnij", { muted: true })}</div></div><div class="name">Schowek</div></div>
        <div class="group project"><div class="tools">${T("newPage", "Nowa\nstrona", L)}${T("template", "Szablon\nstrony", { large: true, menu: true })}<div class="stack">${T("dup", "Powiel")}${T("del", "Usuń")}</div>${T("book", "Projekt", L)}</div><div class="name">Projekt</div></div>
        <div class="group select"><div class="tools">${T("edit", "Edytuj\nstronę", L)}${T("props", "Właściwości", L)}</div><div class="name">Wybierz</div></div>
        <div class="group insert"><div class="tools">${T("textbox", "Pole tekstowe", L)}${T("parttext", "Tekst części", L)}${T("table", "Tabela", L)}${T("parttable", "Tabela części", L)}${T("view3d", "Widok 3D", L)}</div><div class="name">Wstawienie</div></div>
        <div class="group font"><div class="two">
          <div class="row fields"><select class="field family" aria-label="Czcionka"><option>Century Gothic</option></select><select class="field size" aria-label="Rozmiar"><option>11</option></select></div>
          <div class="row"><button class="fmt">B</button><button class="fmt italic">I</button><button class="fmt under">U</button>${T("hilite", "Kolor", B)}<span></span>${T("", "Tekst", { menu: true })}</div></div><div class="name">Czcionka</div></div>
        <div class="group para"><div class="two">
          <div class="row">${T("bullets", "Lista", B)}<span></span>${T("outdent", "Zmniejsz wcięcie", B)}${T("indent", "Zwiększ wcięcie", B)}</div>
          <div class="row">${T("left", "Do lewej", { bare: true, active: true })}${T("center", "Do środka", B)}${T("right", "Do prawej", B)}${T("justify", "Wyjustuj", B)}</div></div><div class="name">Akapit</div></div>
        <div class="group styl"><div class="tools">${T("style", "Style\n", { large: true, menu: true })}</div><div class="name">Styl</div></div>
        <div class="group viewpoint"><div class="tools"><div class="stack three">${T("rotate", "Obróć")}${T("pan", "Przesuń")}${T("home", "Narzędzia główne")}</div>
          <div class="stack three">${T("zoom", "Powiększ/zmniejsz (zoom)", { menu: true })}${T("selpart", "Wybierz części", { menu: true })}${T("cube", "Z przodu", { menu: true })}</div></div><div class="name">Punkt obserwacji</div></div>
      </section>
      <main class="main">
        <aside class="rail">${this.dock("rBook", "Projekt")}${this.dock("rMeta", "Metadane")}${this.dock("rModel", "Model")}${this.dock("rExplode", "Widok rozstrzelony")}${this.dock("rView", "Punkt obserwacji")}${this.dock("rStyle", "Styl renderowania")}</aside>
        <div class="workspace">
          <div class="canvas"><publication-sheet></publication-sheet></div>
          <div class="scroll"><button aria-label="W górę">${box(7, 5, svg`<path d="M1 4l2.500-3L6 4" fill="none" stroke="#333" stroke-width="1.300"/>`)}</button><div class="before"></div><div class="thumb"></div><button aria-label="W dół">${box(7, 5, svg`<path d="M1 1l2.500 3L6 1" fill="none" stroke="#333" stroke-width="1.300"/>`)}</button></div>
        </div>
        <aside class="rail right">${this.dock("rProps", "Właściwości")}</aside>
      </main>
      <div class="scenes"><button class="scene">${icons.scene}Scenorys</button></div>
      <footer class="status">
        <span class="pages">2 z 2</span><span>Gotowe</span>
        <div class="cell fill">${["s1", "s2", "s3", "s4", "s5"].map((i) => html`<button class=${classMap({ on: i === "s2" })} aria-label=${i}>${icons[i]}</button>`)}</div>
        <div class="cell"><button class="percent">101%</button></div>
        <div class="cell"><button class="round" aria-label="Pomniejsz">−</button><input class="zoom" type="range" aria-label="Powiększenie" .value=${String(this.zoom)} @input=${(e: Event) => (this.zoom = +(e.target as HTMLInputElement).value)}><button class="round" aria-label="Powiększ">+</button></div>
        <div class="cell">${["z1", "z2", "z3", "z4"].map((i) => html`<button class=${classMap({ on: i === "z2" })} aria-label=${i}>${icons[i]}</button>`)}<span class="grip">${box(8, 8, svg`<path d="M6 1h1M6 4h1M6 7h1M3 4h1M3 7h1M0 7h1" stroke="#888"/>`)}</span></div>
      </footer>
    </div>`;
  }
}
